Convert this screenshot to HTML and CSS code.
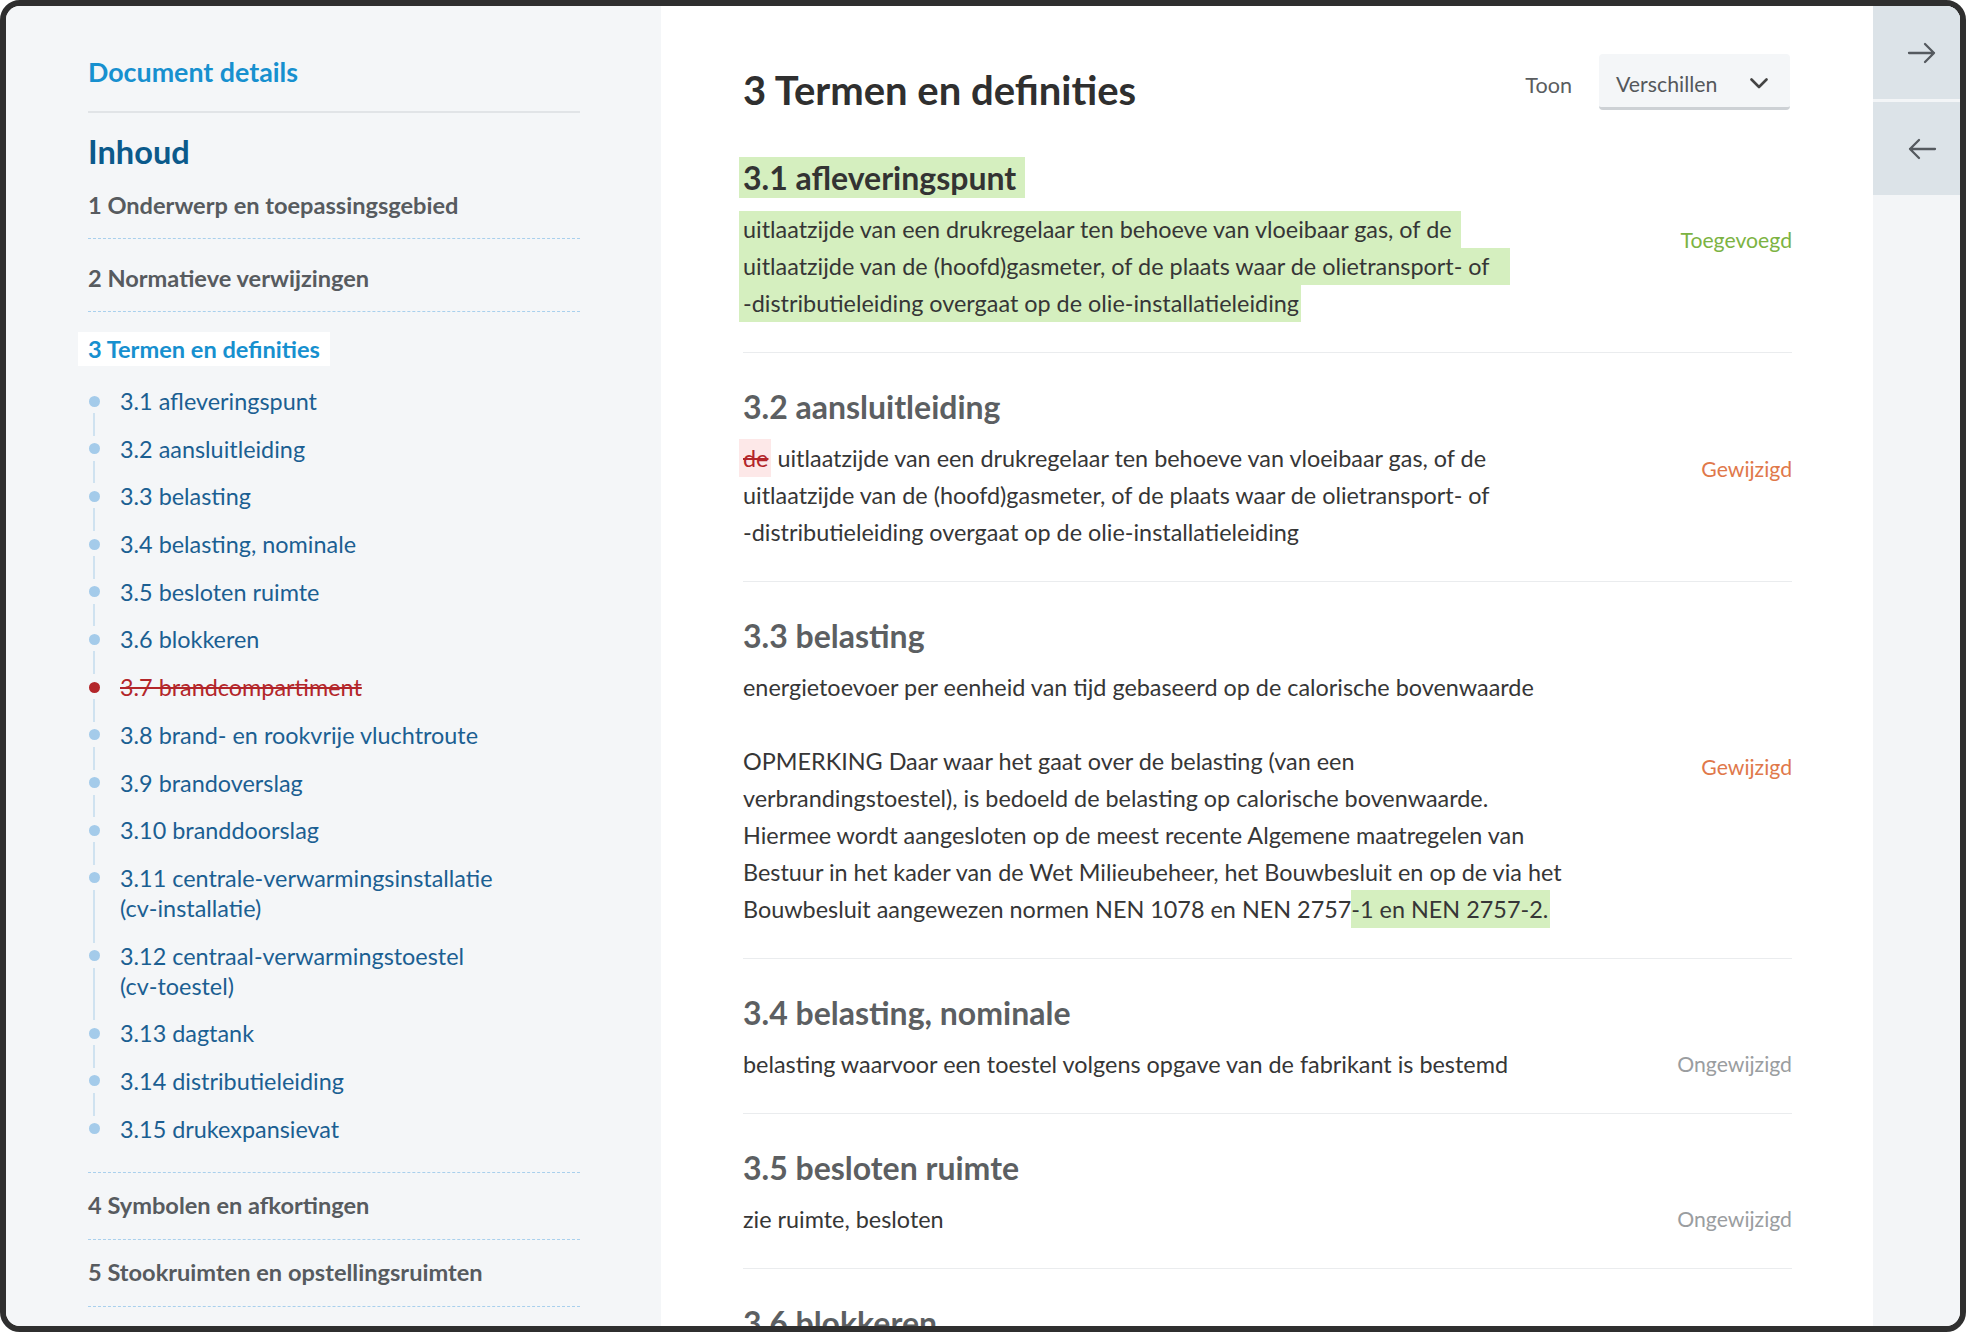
FILE: index.html
```html
<!DOCTYPE html>
<html lang="nl">
<head>
<meta charset="utf-8">
<title>3 Termen en definities</title>
<link rel="stylesheet" href="styles.css">
</head>
<body>
<div class="frame">
  <aside class="sidebar">
    <a class="doc-link" href="#">Document details</a>
    <div class="rule"></div>
    <h2 class="toc-title">Inhoud</h2>
    <ul class="toc">
      <li class="toc-item"><a class="toc-link" href="#">1 Onderwerp en toepassingsgebied</a></li>
      <li class="toc-item"><a class="toc-link" href="#">2 Normatieve verwijzingen</a></li>
      <li class="toc-item toc-item--open">
        <a class="toc-link toc-link--active" href="#">3 Termen en definities</a>
        <ul class="subtoc">
          <li class="sub-item"><a href="#">3.1 afleveringspunt</a></li>
          <li class="sub-item"><a href="#">3.2 aansluitleiding</a></li>
          <li class="sub-item"><a href="#">3.3 belasting</a></li>
          <li class="sub-item"><a href="#">3.4 belasting, nominale</a></li>
          <li class="sub-item"><a href="#">3.5 besloten ruimte</a></li>
          <li class="sub-item"><a href="#">3.6 blokkeren</a></li>
          <li class="sub-item sub-item--deleted"><a href="#">3.7 brandcompartiment</a></li>
          <li class="sub-item"><a href="#">3.8 brand- en rookvrije vluchtroute</a></li>
          <li class="sub-item"><a href="#">3.9 brandoverslag</a></li>
          <li class="sub-item"><a href="#">3.10 branddoorslag</a></li>
          <li class="sub-item"><a href="#">3.11 centrale-verwarmingsinstallatie<br>(cv-installatie)</a></li>
          <li class="sub-item"><a href="#">3.12 centraal-verwarmingstoestel<br>(cv-toestel)</a></li>
          <li class="sub-item"><a href="#">3.13 dagtank</a></li>
          <li class="sub-item"><a href="#">3.14 distributieleiding</a></li>
          <li class="sub-item"><a href="#">3.15 drukexpansievat</a></li>
        </ul>
      </li>
      <li class="toc-item toc-item--tail"><a class="toc-link" href="#">4 Symbolen en afkortingen</a></li>
      <li class="toc-item toc-item--tail"><a class="toc-link" href="#">5 Stookruimten en opstellingsruimten</a></li>
    </ul>
  </aside>

  <main class="main">
    <header class="main-head">
      <h1 class="page-title">3 Termen en definities</h1>
      <div class="view-toggle">
        <span class="view-label">Toon</span>
        <button class="select" type="button">
          <span>Verschillen</span>
          <svg class="chevron" width="18" height="11" viewBox="0 0 18 11" aria-hidden="true"><path d="M1.5 1.5 L9 9 L16.5 1.5" fill="none" stroke="#444" stroke-width="2.6" stroke-linecap="round" stroke-linejoin="round"/></svg>
        </button>
      </div>
    </header>

    <section class="term">
      <h3 class="term-title term-title--added">3.1 afleveringspunt</h3>
      <div class="change-row">
        <p class="change-text change-text--added"><span class="hl-line hl-line--a">uitlaatzijde van een drukregelaar ten behoeve van vloeibaar gas, of de</span><span class="hl-line hl-line--b">uitlaatzijde van de (hoofd)gasmeter, of de plaats waar de olietransport- of</span><span class="hl-line">-distributieleiding overgaat op de olie-installatieleiding</span></p>
        <span class="status status--added status--low">Toegevoegd</span>
      </div>
    </section>

    <section class="term">
      <h3 class="term-title">3.2 aansluitleiding</h3>
      <div class="change-row">
        <p class="change-text"><span class="del">de</span> uitlaatzijde van een drukregelaar ten behoeve van vloeibaar gas, of de<br>uitlaatzijde van de (hoofd)gasmeter, of de plaats waar de olietransport- of<br>-distributieleiding overgaat op de olie-installatieleiding</p>
        <span class="status status--changed status--low">Gewijzigd</span>
      </div>
    </section>

    <section class="term">
      <h3 class="term-title">3.3 belasting</h3>
      <div class="change-row">
        <p class="change-text">energietoevoer per eenheid van tijd gebaseerd op de calorische bovenwaarde</p>
      </div>
      <div class="change-row change-row--spaced">
        <p class="change-text">OPMERKING Daar waar het gaat over de belasting (van een<br>verbrandingstoestel), is bedoeld de belasting op calorische bovenwaarde.<br>Hiermee wordt aangesloten op de meest recente Algemene maatregelen van<br>Bestuur in het kader van de Wet Milieubeheer, het Bouwbesluit en op de via het<br>Bouwbesluit aangewezen normen NEN 1078 en NEN 2757<span class="ins">-1 en NEN 2757-2.</span></p>
        <span class="status status--changed status--mid">Gewijzigd</span>
      </div>
    </section>

    <section class="term">
      <h3 class="term-title">3.4 belasting, nominale</h3>
      <div class="change-row">
        <p class="change-text">belasting waarvoor een toestel volgens opgave van de fabrikant is bestemd</p>
        <span class="status status--same">Ongewijzigd</span>
      </div>
    </section>

    <section class="term">
      <h3 class="term-title">3.5 besloten ruimte</h3>
      <div class="change-row">
        <p class="change-text">zie ruimte, besloten</p>
        <span class="status status--same">Ongewijzigd</span>
      </div>
    </section>

    <section class="term term--last">
      <h3 class="term-title">3.6 blokkeren</h3>
    </section>
  </main>

  <nav class="rail">
    <button class="rail-btn" type="button" aria-label="Volgende">
      <svg width="30" height="24" viewBox="0 0 30 24" aria-hidden="true"><path d="M2 12 H27 M18 3 L27 12 L18 21" fill="none" stroke="#555a5f" stroke-width="2.3" stroke-linecap="round" stroke-linejoin="round"/></svg>
    </button>
    <button class="rail-btn" type="button" aria-label="Vorige">
      <svg width="30" height="24" viewBox="0 0 30 24" aria-hidden="true"><path d="M28 12 H3 M12 3 L3 12 L12 21" fill="none" stroke="#555a5f" stroke-width="2.3" stroke-linecap="round" stroke-linejoin="round"/></svg>
    </button>
  </nav>
</div>
</body>
</html>
```

FILE: styles.css
```css
* { box-sizing: border-box; }

html, body {
  margin: 0;
  padding: 0;
  background: #ffffff;
}

body {
  font-family: Lato, "Liberation Sans", sans-serif;
  color: #333333;
}

a { text-decoration: none; color: inherit; }

.frame {
  width: 1966px;
  height: 1332px;
  border: 6px solid #2f2f2f;
  border-radius: 20px;
  overflow: hidden;
  display: grid;
  grid-template-columns: 655px 1fr 87px;
  background: #ffffff;
}

/* ---------- Sidebar ---------- */
.sidebar {
  background: #f4f6f8;
  padding: 49px 81px 0 82px;
  overflow: hidden;
}

.doc-link {
  display: block;
  font-size: 26.8px;
  font-weight: 700;
  line-height: 34px;
  color: #1790cf;
}

.rule {
  height: 2px;
  background: #e1e4e7;
  margin-top: 22px;
}

.toc-title {
  margin: 24px 0 0;
  font-size: 32.6px;
  font-weight: 700;
  line-height: 30px;
  color: #0b5a8b;
}

.toc {
  list-style: none;
  margin: -1px 0 0;
  padding: 0;
}

.toc-item {
  padding: 24px 0 18px;
  border-bottom: 1.5px dashed #a9d0ed;
}

.toc-item--tail {
  padding: 17px 0 19px;
}

.toc-link {
  display: block;
  font-size: 23.6px;
  font-weight: 700;
  line-height: 30px;
  color: #575b5f;
  white-space: nowrap;
}

.toc-item--open {
  padding-top: 20px;
  padding-bottom: 28px;
}

.toc-link--active {
  display: inline-block;
  background: #ffffff;
  color: #1790cf;
  padding: 2px 10px;
  margin-left: -10px;
}

.subtoc {
  list-style: none;
  margin: 20px 0 0;
  padding: 0 0 0 32px;
  display: flex;
  flex-direction: column;
  gap: 17.7px;
}

.sub-item {
  position: relative;
  font-size: 23.4px;
  line-height: 30px;
  color: #1b5f92;
  white-space: nowrap;
}

.sub-item::before {
  content: "";
  position: absolute;
  left: -31.5px;
  top: 9.5px;
  width: 11px;
  height: 11px;
  border-radius: 50%;
  background: #a4cbea;
}

.sub-item::after {
  content: "";
  position: absolute;
  left: -27px;
  top: 27px;
  bottom: -19.7px;
  width: 2px;
  background: #cfe2f0;
}

.sub-item:last-child::after { display: none; }

.sub-item--deleted { color: #b3262a; }
.sub-item--deleted a { text-decoration: line-through; text-decoration-thickness: 1.5px; }
.sub-item--deleted::before { background: #b3262a; }

/* ---------- Main ---------- */
.main {
  padding: 48px 81px 0 82px;
  overflow: hidden;
}

.main-head {
  display: flex;
  justify-content: space-between;
  align-items: flex-start;
  margin-bottom: 9px;
}

.page-title {
  margin: 12px 0 0;
  font-size: 40px;
  font-weight: 700;
  line-height: 48px;
  color: #2f2f2f;
}

.view-toggle {
  display: flex;
  align-items: center;
  height: 56px;
  margin-right: 2px;
}

.view-label {
  font-size: 21.6px;
  color: #5a5d60;
  margin-right: 27px;
  padding-top: 5px;
}

.select {
  display: flex;
  align-items: center;
  justify-content: space-between;
  width: 191px;
  height: 56px;
  padding: 7px 22px 0 17px;
  background: #f4f6f8;
  border: 0;
  border-bottom: 3px solid #cdd1d5;
  border-radius: 4px;
  font-family: inherit;
  font-size: 21.3px;
  color: #55585b;
}

.chevron { display: block; margin-top: -1px; }

.term {
  padding: 34px 0 30px;
  border-bottom: 1.5px solid #eaecee;
}

.term--last { border-bottom: 0; }

.term-title {
  margin: 0 0 13px;
  font-size: 32px;
  font-weight: 700;
  line-height: 40px;
  color: #5c5f62;
}

.term-title--added {
  display: table;
  background: #d5efbf;
  color: #333333;
  padding: 0 9px 0 4px;
  margin-left: -4px;
  line-height: 41px;
}

.change-row {
  display: flex;
  align-items: flex-start;
  justify-content: space-between;
}

.change-row--spaced { margin-top: 37px; }

.change-text {
  margin: 0;
  font-size: 23.4px;
  line-height: 37px;
  color: #363636;
  white-space: nowrap;
}

.hl-line {
  display: block;
  width: fit-content;
  background: #d5efbf;
  margin-left: -4px;
  padding-left: 4px;
  padding-right: 2px;
}

.hl-line--a { padding-right: 9px; }
.hl-line--b { padding-right: 20px; }

.del {
  background: #fde8e8;
  color: #b3262a;
  text-decoration: line-through;
  padding: 5px 3px 5px 4px;
  margin-left: -4px;
}

.ins {
  background: #d5efbf;
  padding: 5px 2px 5px 0;
}

.status {
  font-size: 21.2px;
  line-height: 37px;
  margin-left: 24px;
  white-space: nowrap;
}

.status--low { padding-top: 11px; }
.status--mid { padding-top: 6px; }

.status--added { color: #7cb342; }
.status--changed { color: #e0784a; }
.status--same { color: #9a9da0; }

/* ---------- Right rail ---------- */
.rail {
  background: #f3f5f7;
  display: flex;
  flex-direction: column;
  gap: 3px;
}

.rail-btn {
  height: 93px;
  border: 0;
  background: #dce3e8;
  display: flex;
  align-items: center;
  justify-content: center;
  padding: 0 0 0 10px;
}

.rail-btn svg { display: block; }
```
